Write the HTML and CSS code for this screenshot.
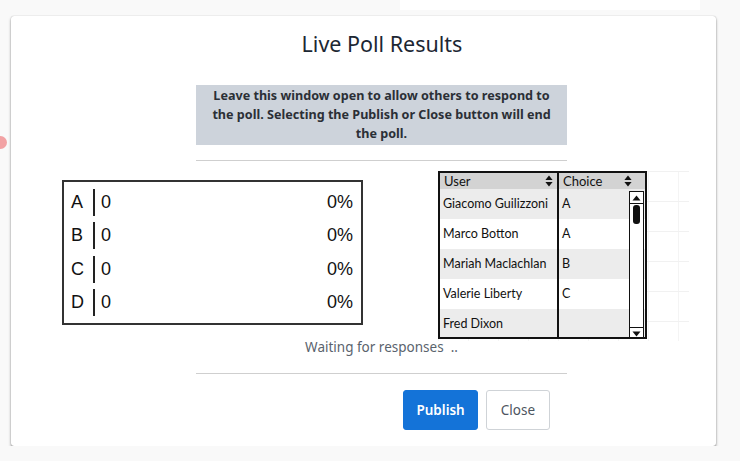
FILE: index.html
```html
<!DOCTYPE html>
<html lang="en">

<head>
  <meta charset="UTF-8">
  <meta name="viewport" content="width=device-width, initial-scale=1.0">
  <title>Live Poll Results</title>
  <link rel="stylesheet" href="styles.css">
</head>

<body>
  <div class="page-strip"></div>
  <div class="page-dot"></div>

  <div class="modal">
    <h2 class="modal-title">Live Poll Results</h2>
    <div class="notice">Leave this window open to allow others to respond to<br>the poll. Selecting the Publish or Close button will end<br>the poll.</div>
    <hr class="divider">

    <div class="results">
      <div class="tally">
        <div class="tally-row"><span class="tally-key">A</span><span class="tally-count">0</span><span class="tally-pct">0%</span></div>
        <div class="tally-row"><span class="tally-key">B</span><span class="tally-count">0</span><span class="tally-pct">0%</span></div>
        <div class="tally-row"><span class="tally-key">C</span><span class="tally-count">0</span><span class="tally-pct">0%</span></div>
        <div class="tally-row"><span class="tally-key">D</span><span class="tally-count">0</span><span class="tally-pct">0%</span></div>
      </div>

      <div class="canvas">
        <div class="grid">
          <div class="grid-cols">
            <div class="col col-user">
              <div class="grid-head">User
                <svg class="sort" width="8" height="12" viewBox="0 0 8 12"><path d="M4 0.5 L7.6 5 H0.4 Z M0.4 7 H7.6 L4 11.5 Z" fill="#111"/></svg>
              </div>
              <div class="cell odd">Giacomo Guilizzoni</div>
              <div class="cell">Marco Botton</div>
              <div class="cell odd">Mariah Maclachlan</div>
              <div class="cell">Valerie Liberty</div>
              <div class="cell odd">Fred Dixon</div>
            </div>
            <div class="col col-choice">
              <div class="grid-head">Choice
                <svg class="sort" width="8" height="12" viewBox="0 0 8 12"><path d="M4 0.5 L7.6 5 H0.4 Z M0.4 7 H7.6 L4 11.5 Z" fill="#111"/></svg>
              </div>
              <div class="choice-body">
                <div class="choice-cells">
                  <div class="cell odd">A</div>
                  <div class="cell">A</div>
                  <div class="cell odd">B</div>
                  <div class="cell">C</div>
                  <div class="cell odd"></div>
                </div>
                <div class="scrollbar">
                  <div class="scroll-btn">
                    <svg width="9" height="6" viewBox="0 0 9 6"><path d="M4.5 0.5 L8.5 5.5 H0.5 Z" fill="#111"/></svg>
                  </div>
                  <div class="scroll-track"><div class="scroll-thumb"></div></div>
                  <div class="scroll-btn scroll-btn-down">
                    <svg width="9" height="6" viewBox="0 0 9 6"><path d="M0.5 0.5 H8.5 L4.5 5.5 Z" fill="#111"/></svg>
                  </div>
                </div>
              </div>
            </div>
          </div>
        </div>
      </div>
    </div>

    <div class="status">Waiting for responses &nbsp;..</div>
    <hr class="divider footer-rule">

    <div class="actions">
      <button class="btn btn-primary">Publish</button>
      <button class="btn btn-default">Close</button>
    </div>
  </div>
</body>

</html>
```

FILE: styles.css
```css
body {
  margin: 0;
  background: #f9f9f9;
  font-family: "Noto Sans", "Open Sans", sans-serif;
  overflow: hidden;
}

.page-strip {
  width: 300px;
  height: 10px;
  margin-left: 400px;
  background: #ffffff;
}

.page-dot {
  position: absolute;
  left: -6px;
  top: 136px;
  width: 13px;
  height: 13px;
  border-radius: 50%;
  background: #f2a2a4;
  filter: blur(0.6px);
}

.modal {
  box-sizing: border-box;
  width: 705px;
  height: 430px;
  margin: 6px 0 0 11px;
  padding-top: 13px;
  background: #ffffff;
  border-radius: 3px;
  box-shadow: 0 2px 3px rgba(0, 0, 0, 0.4), 0 0 1px rgba(0, 0, 0, 0.35);
}

.modal-title {
  width: 372px;
  margin: 0 0 0 185px;
  text-align: center;
  font-size: 21.5px;
  font-weight: 400;
  line-height: 30px;
  color: #1c2733;
}

.notice {
  box-sizing: border-box;
  width: 371px;
  height: 60px;
  margin: 26px 0 0 185px;
  padding-top: 1px;
  background: #cdd3db;
  text-align: center;
  font-size: 12.6px;
  font-weight: 700;
  line-height: 19px;
  color: #2b2f36;
  white-space: nowrap;
}

.divider {
  width: 371px;
  margin: 15px 0 0 185px;
  border: 0;
  border-top: 1px solid #cfcfcf;
}

.results {
  display: flex;
  align-items: flex-start;
  margin: 10px 0 0 51px;
}

.tally {
  box-sizing: border-box;
  width: 301px;
  margin-top: 9px;
  padding: 4px 0;
  border: 2px solid #333333;
  font-family: "Liberation Sans", Arial, sans-serif;
  font-size: 18px;
  color: #111111;
}

.tally-row {
  display: flex;
  align-items: center;
  height: 33.3px;
}

.tally-key {
  width: 22px;
  padding-left: 7px;
}

.tally-count {
  flex: 1;
  height: 27px;
  line-height: 27px;
  padding-left: 6px;
  border-left: 2px solid #222222;
}

.tally-pct {
  padding-right: 8px;
}

.canvas {
  margin-left: 75px;
  padding: 0 42px 2px 0;
  background-color: #ffffff;
  background-image:
    linear-gradient(#f1f1f1 1px, transparent 1px),
    linear-gradient(90deg, #f4f4f4 1px, transparent 1px);
  background-size: 30px 30px;
}

.grid {
  box-sizing: border-box;
  width: 209px;
  height: 168px;
  border: 2px solid #111111;
  font-family: Lato, "Noto Sans", sans-serif;
  font-size: 12.5px;
  color: #111111;
  overflow: hidden;
}

.grid-cols {
  display: flex;
  height: 100%;
}

.col-user {
  width: 117px;
  border-right: 2px solid #111111;
}

.col-choice {
  flex: 1;
  display: flex;
  flex-direction: column;
}

.grid-head {
  display: flex;
  align-items: center;
  justify-content: space-between;
  height: 16px;
  padding: 0 4px 0 4px;
  background: #d3d3d3;
  font-size: 13px;
  line-height: 16px;
}

.sort {
  display: block;
  flex: none;
}

.col-choice .grid-head {
  padding-right: 13px;
}

.cell {
  height: 30px;
  line-height: 30px;
  padding-left: 3px;
  background: #ffffff;
  white-space: nowrap;
}

.cell.odd {
  background: #ececec;
}

.choice-body {
  flex: 1;
  display: flex;
  position: relative;
}

.choice-cells {
  flex: 1;
}

.scrollbar {
  position: absolute;
  right: 1px;
  top: 2px;
  bottom: 0;
  box-sizing: border-box;
  width: 15px;
  display: flex;
  flex-direction: column;
  background: #ffffff;
  border: 1.5px solid #111111;
  border-bottom: 0;
}

.scroll-btn {
  display: flex;
  align-items: center;
  justify-content: center;
  height: 11px;
  border-bottom: 1.5px solid #111111;
}

.scroll-btn-down {
  border-bottom: 0;
  border-top: 1.5px solid #111111;
}

.scroll-track {
  flex: 1;
  padding: 1px 2px;
}

.scroll-thumb {
  width: 7px;
  height: 19px;
  margin: 0 auto;
  border-radius: 3px;
  background: #111111;
}

.status {
  width: 371px;
  margin: -4px 0 0 185px;
  text-align: center;
  font-size: 13.5px;
  line-height: 20px;
  color: #5a636d;
}

.footer-rule {
  margin-top: 16px;
}

.actions {
  display: flex;
  justify-content: flex-end;
  gap: 8px;
  width: 354px;
  margin: 16px 0 0 185px;
}

.btn {
  height: 40px;
  padding: 0 14px;
  border-radius: 3px;
  font-family: "Noto Sans", "Open Sans", sans-serif;
  font-size: 13.5px;
}

.btn-primary {
  padding: 0 12px;
  border: 1px solid #1473d8;
  background: #1473d8;
  color: #ffffff;
  font-weight: 600;
}

.btn-default {
  border: 1px solid #cfd3d7;
  background: #ffffff;
  color: #4d5560;
}
```
